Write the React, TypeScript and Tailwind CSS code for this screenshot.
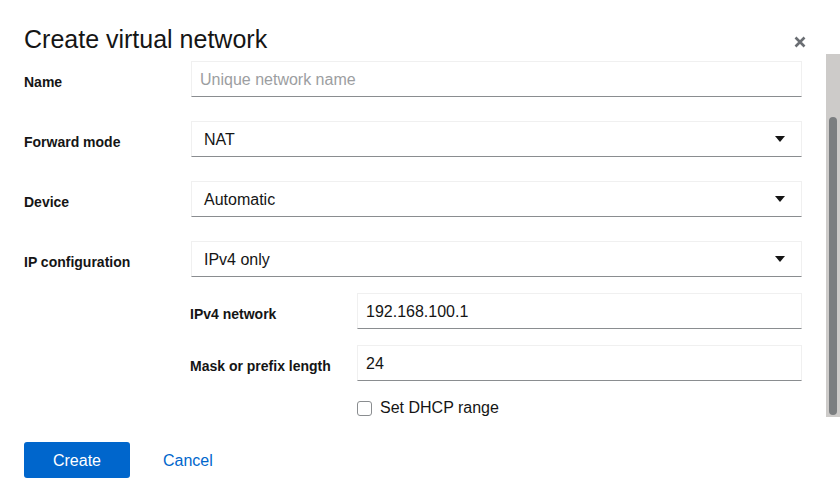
import React from "react";

const font = { fontFamily: '"Liberation Sans", Arial, sans-serif' };

function Caret() {
  return (
    <svg width="10" height="6" viewBox="0 0 10 6" className="shrink-0">
      <polygon points="0,0 10,0 5,6" fill="#151515" />
    </svg>
  );
}

function TextBox({ value, placeholder }: { value?: string; placeholder?: string }) {
  return (
    <div className="h-[36px] flex items-center pt-[2px] pl-2 pr-4 border border-[#f0f0f0] border-b-[#8a8d90] bg-white text-[16px]">
      {value ? (
        <span className="text-[#151515]">{value}</span>
      ) : (
        <span className="text-[#9c9ea1]">{placeholder}</span>
      )}
    </div>
  );
}

function SelectBox({ value }: { value: string }) {
  return (
    <div className="h-[36px] flex items-center justify-between pl-3 pr-4 border border-[#f0f0f0] border-b-[#8a8d90] bg-white text-[16px] text-[#151515]">
      <span className="pt-[2px]">{value}</span>
      <Caret />
    </div>
  );
}

function Row({ label, children }: { label: string; children: React.ReactNode }) {
  return (
    <div className="grid grid-cols-[167px_1fr] items-center">
      <span className="pt-[7px] text-[14px] font-bold text-[#151515]">{label}</span>
      {children}
    </div>
  );
}

export default function App() {
  return (
    <div className="w-[840px] h-[502px] bg-white flex flex-col overflow-hidden" style={font}>
      <div className="h-[54px] flex items-end justify-between pl-6 pr-[34px]">
        <h1 className="text-[25px] leading-[30px] text-[#151515]">Create virtual network</h1>
        <button className="mb-[6px] w-[12px] h-[12px] flex items-center justify-center" aria-label="Close">
          <svg width="12" height="12" viewBox="0 0 12 12">
            <path d="M1.5 1.5 L10.5 10.5 M10.5 1.5 L1.5 10.5" stroke="#6a6e73" strokeWidth="2.6" strokeLinecap="butt" />
          </svg>
        </button>
      </div>

      <div className="h-[363px] flex">
        <div className="flex-1 pl-6 pr-6 pt-[7px]">
          <div className="flex flex-col gap-6">
            <Row label="Name">
              <TextBox placeholder="Unique network name" />
            </Row>
            <Row label="Forward mode">
              <SelectBox value="NAT" />
            </Row>
            <Row label="Device">
              <SelectBox value="Automatic" />
            </Row>
            <Row label="IP configuration">
              <SelectBox value="IPv4 only" />
            </Row>
          </div>

          <div className="pl-[166px] mt-4 flex flex-col gap-4">
            <Row label="IPv4 network">
              <TextBox value="192.168.100.1" />
            </Row>
            <Row label="Mask or prefix length">
              <TextBox value="24" />
            </Row>
          </div>

          <div className="pl-[333px] mt-[15px] h-6 flex items-center gap-2">
            <span className="w-[15px] h-[15px] rounded-[3px] border border-[#8a8d90] bg-white" />
            <span className="text-[16px] text-[#151515]">Set DHCP range</span>
          </div>
        </div>

        <div className="w-[14px] bg-[#cdcbc9] flex flex-col items-center">
          <div className="mt-[63px] w-[8px] h-[298px] rounded-full bg-[#7b7e80]" />
        </div>
      </div>

      <div className="pt-[25px] px-6 flex items-center gap-[17px]">
        <button className="w-[106px] h-[36px] pt-[2px] rounded-[3px] bg-[#0066cc] text-white text-[16px]">Create</button>
        <button className="px-4 h-[36px] pt-[2px] text-[16px] text-[#0066cc]">Cancel</button>
      </div>
    </div>
  );
}
